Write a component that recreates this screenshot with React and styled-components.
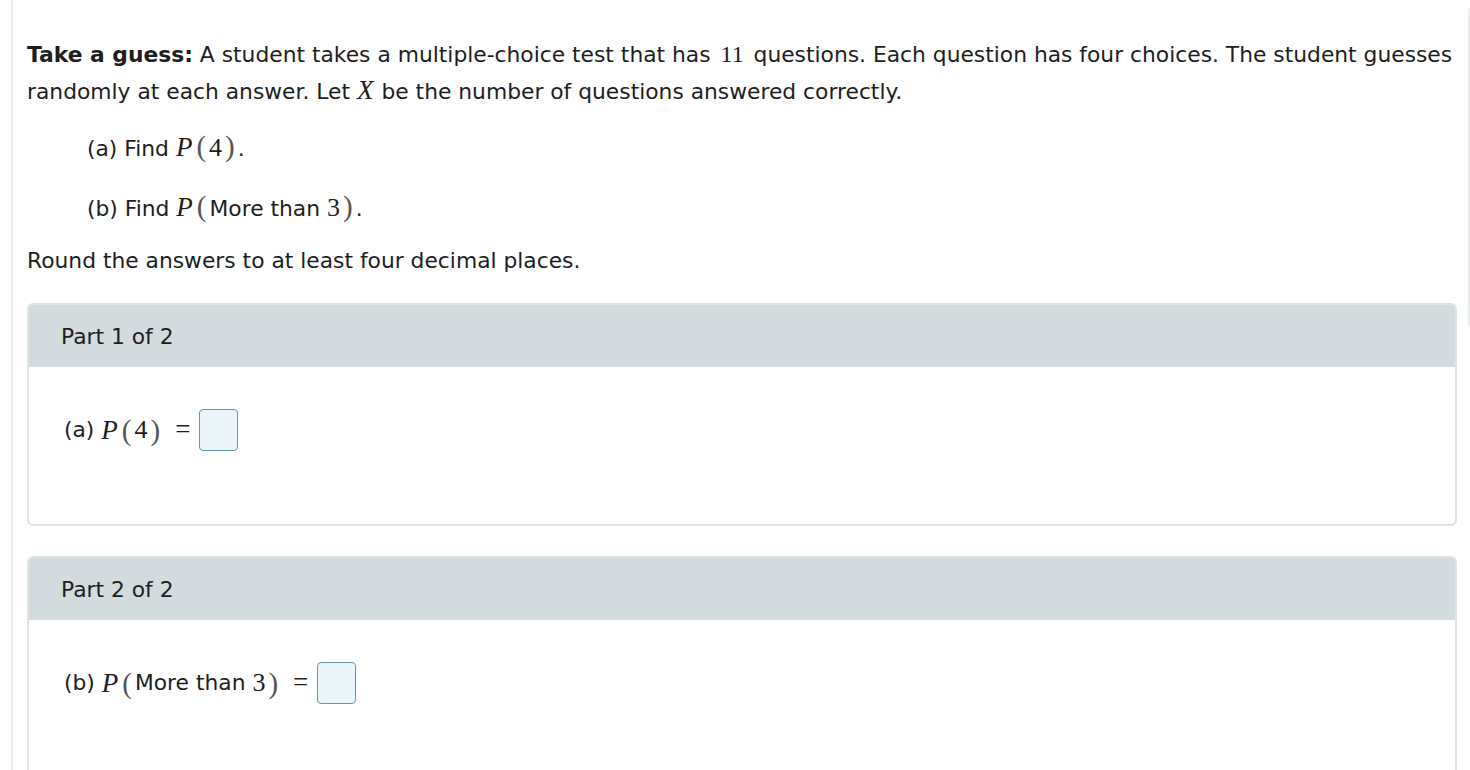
import styled, { createGlobalStyle } from "styled-components";

const GlobalStyle = createGlobalStyle`
  html, body {
    margin: 0;
    padding: 0;
    background: #ffffff;
  }
  body {
    font-family: "DejaVu Sans", Verdana, sans-serif;
    color: #1e1e1e;
  }
`;

export default function App() {
  return (
    <>
      <GlobalStyle />
      <Page>
        <Column>
          <Intro>
            <strong>Take a guess:</strong> A student takes a multiple-choice test that has{" "}
            <MathNum $inline>11</MathNum> questions. Each question has four choices. The student
            guesses randomly at each answer. Let <MathVar>X</MathVar> be the number of questions
            answered correctly.
          </Intro>

          <Item>
            (a) Find <MathVar>P</MathVar>
            <Paren>(</Paren>
            <MathNum>4</MathNum>
            <Paren>)</Paren>.
          </Item>
          <Item $gap={20}>
            (b) Find <MathVar>P</MathVar>
            <Paren>(</Paren>More than <MathNum>3</MathNum>
            <Paren>)</Paren>.
          </Item>

          <Note>Round the answers to at least four decimal places.</Note>

          <Card>
            <CardHeader>Part 1 of 2</CardHeader>
            <CardBody>
              <AnswerRow>
                (a) <MathVar>P</MathVar>
                <Paren>(</Paren>
                <MathNum>4</MathNum>
                <Paren>)</Paren>
                <Equals>=</Equals>
                <AnswerBox />
              </AnswerRow>
            </CardBody>
          </Card>

          <Card $last>
            <CardHeader>Part 2 of 2</CardHeader>
            <CardBody>
              <AnswerRow>
                (b) <MathVar>P</MathVar>
                <Paren>(</Paren>More than <MathNum>3</MathNum>
                <Paren>)</Paren>
                <Equals>=</Equals>
                <AnswerBox />
              </AnswerRow>
            </CardBody>
          </Card>
        </Column>
        <Rail />
      </Page>
    </>
  );
}

const Page = styled.div`
  display: flex;
  align-items: flex-start;
  min-height: 100vh;
`;

const Column = styled.main`
  flex: 1;
  margin-left: 11px;
  min-height: 100vh;
  border-left: 2px solid #e7ecef;
  padding: 36px 0 0 14px;
  box-sizing: border-box;
`;

const Rail = styled.div`
  width: 2px;
  height: 318px;
  margin: 8px 0 0 11px;
  background: #e7ecef;
  border-radius: 1px;
`;

const Intro = styled.p`
  margin: 0;
  font-size: 21.8px;
  line-height: 37px;
  padding-right: 4px;

  strong {
    font-weight: bold;
  }
`;

const MathVar = styled.span`
  font-family: "Liberation Serif", "Times New Roman", serif;
  font-style: italic;
  font-size: 27px;
  line-height: 0;
  margin-right: 1px;
`;

const MathNum = styled.span`
  font-family: "Liberation Serif", "Times New Roman", serif;
  font-size: ${(p) => (p.$inline ? 24 : 26)}px;
  line-height: 0;
  margin: ${(p) => (p.$inline ? "0 3px" : "0")};
`;

const Paren = styled.span`
  font-family: "Liberation Serif", "Times New Roman", serif;
  font-size: 29px;
  line-height: 0;
  color: #555;
  margin: 0 3px;
`;

const Item = styled.div`
  margin: ${(p) => p.$gap ?? 19}px 0 0 60px;
  font-size: 21.8px;
  line-height: 40px;
`;

const Note = styled.div`
  margin-top: 13px;
  font-size: 21.8px;
  line-height: 37px;
`;

const Card = styled.section`
  margin-top: ${(p) => (p.$last ? 30 : 24)}px;
  border: 2px solid #dfe4e7;
  border-radius: 6px;
  overflow: hidden;
  background: #fff;
`;

const CardHeader = styled.div`
  height: 62px;
  display: flex;
  align-items: center;
  padding-left: 32px;
  background: #d3dbdf;
  font-size: 21.8px;
`;

const CardBody = styled.div`
  padding: 40px 35px 72px;
`;

const AnswerRow = styled.div`
  display: flex;
  align-items: center;
  font-size: 21.8px;
  white-space: pre;
  height: 45px;
`;

const Equals = styled.span`
  font-family: "Liberation Serif", "Times New Roman", serif;
  font-size: 27px;
  margin: 0 9px 0 12px;
`;

const AnswerBox = styled.span`
  display: inline-block;
  width: 37px;
  height: 40px;
  border: 1.5px solid #5b9aab;
  border-radius: 4px;
  background: #eaf4f9;
`;
